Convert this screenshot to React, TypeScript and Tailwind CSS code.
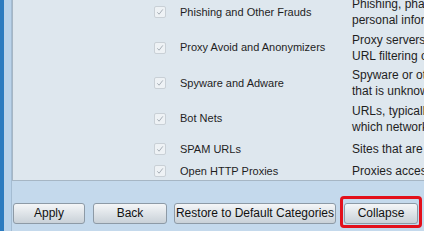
import React from 'react';

type Row = { label: string; desc: string[]; h: string };

const rows: Row[] = [
  { label: 'Phishing and Other Frauds', desc: ['Phishing, pharming and other sites that pose as legitimate to obtain', 'personal information'], h: 'h-[36px]' },
  { label: 'Proxy Avoid and Anonymizers', desc: ['Proxy servers and other methods to bypass', 'URL filtering or monitoring'], h: 'h-[35px]' },
  { label: 'Spyware and Adware', desc: ['Spyware or other malicious software', 'that is unknowingly installed'], h: 'h-[36px]' },
  { label: 'Bot Nets', desc: ['URLs, typically IP addresses, through', 'which networks of bots are controlled'], h: 'h-[35px]' },
  { label: 'SPAM URLs', desc: ['Sites that are known to be spam'], h: 'h-[26px]' },
  { label: 'Open HTTP Proxies', desc: ['Proxies accessible without authentication'], h: 'h-[18px]' },
];

function Check() {
  return (
    <div className="flex h-[12px] w-[12px] items-center justify-center rounded-[2px] border border-[#c9d0d6] bg-[#eef2f5]">
      <svg width="8" height="8" viewBox="0 0 8 8">
        <path d="M1.3 4.3 L3.1 6.2 L6.8 1.4" fill="none" stroke="#a7afb7" strokeWidth="1" />
      </svg>
    </div>
  );
}

function Btn({ children, w }: { children: React.ReactNode; w: string }) {
  return (
    <button
      className={`${w} h-[21px] rounded-[3px] border border-[#8d9aa6] bg-gradient-to-b from-[#f4f6f8] to-[#c9d1d8] text-[12px] leading-none text-[#111]`}
    >
      {children}
    </button>
  );
}

export default function App() {
  return (
    <div
      className="flex h-[231px] w-[424px] overflow-hidden bg-[#c4d9ec]"
      style={{ fontFamily: '"Liberation Sans", Arial, sans-serif' }}
    >
      <div className="w-[4px] shrink-0 bg-[#2b7bc0]" />
      <div className="w-[7px] shrink-0 bg-[#bad3ea]" />
      <div className="w-[1px] shrink-0 bg-[#a4bcd2]" />
      <div className="flex min-w-0 flex-1 flex-col">
        <div className="-mt-[6px] overflow-hidden border-b border-l border-[#a6b6c4] bg-[#dee7ee]">
          {rows.map((r) => (
            <div key={r.label} className={`flex items-center ${r.h}`}>
              <div className="flex w-[153px] shrink-0 justify-end">
                <Check />
              </div>
              <div className="ml-[14px] w-[172px] shrink-0 whitespace-nowrap text-[11px] text-[#1e1e1e]">{r.label}</div>
              <div className="whitespace-nowrap text-[12px] leading-[16px] text-[#1e1e1e]">
                {r.desc.map((d) => (
                  <div key={d}>{d}</div>
                ))}
              </div>
            </div>
          ))}
        </div>
        <div className="mt-[15px] flex items-center">
          <div className="ml-[1px]">
            <Btn w="w-[72px]">Apply</Btn>
          </div>
          <div className="ml-[8px]">
            <Btn w="w-[74px]">Back</Btn>
          </div>
          <div className="ml-[7px]">
            <Btn w="w-[162px]">Restore to Default Categories</Btn>
          </div>
          <div className="ml-[4px] rounded-[4px] border-[3px] border-[#e3101b] px-[1px] py-[1px]">
            <Btn w="w-[74px]">Collapse</Btn>
          </div>
        </div>
      </div>
    </div>
  );
}
